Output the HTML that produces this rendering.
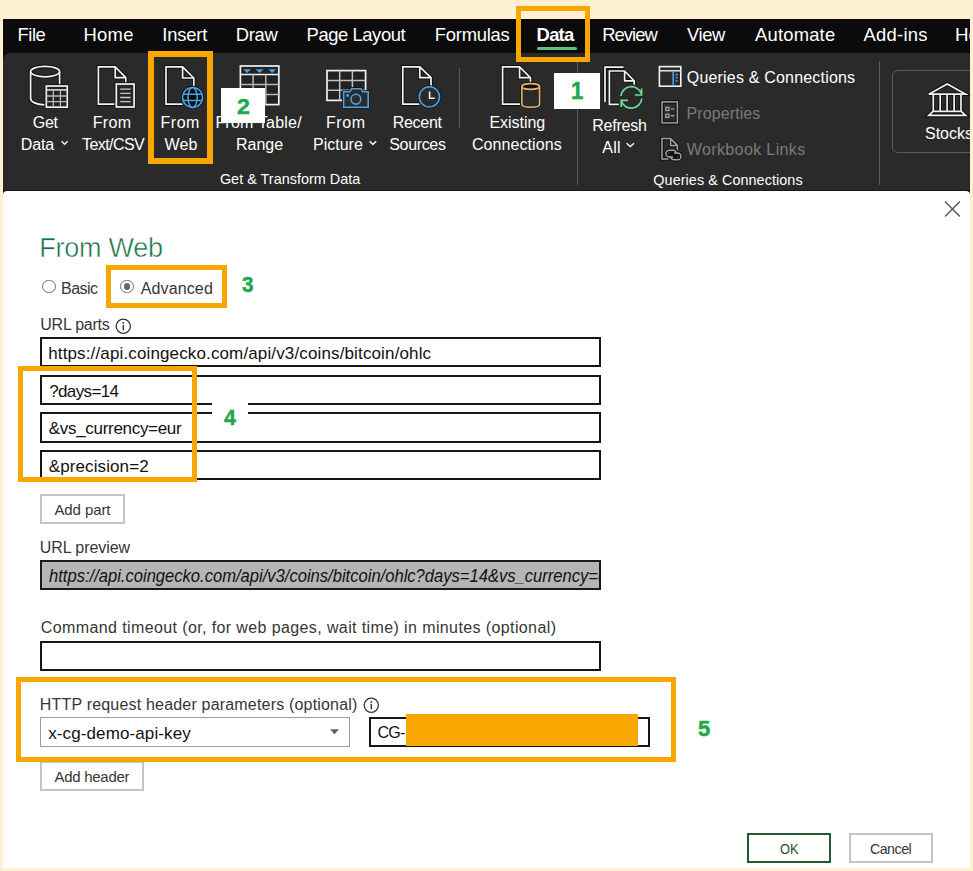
<!DOCTYPE html>
<html><head><meta charset="utf-8"><title>From Web</title>
<style>
html,body{margin:0;padding:0;width:973px;height:871px;overflow:hidden;background:#fdf1d1;font-family:"Liberation Sans",sans-serif}
.a{position:absolute;box-sizing:border-box}
.t{position:absolute;white-space:nowrap;line-height:1;transform-origin:0 0;font-family:"Liberation Sans",sans-serif}
.ov{z-index:5}
.dg{z-index:6}
</style></head><body>
<!-- menu + ribbon -->
<div class="a" style="left:3px;top:19px;width:967px;height:180px;background:#0b0b0b"></div>
<div class="a" style="left:3px;top:53px;width:967px;height:146px;background:#2a2a2a;border-top-left-radius:7px;border-top-right-radius:0"></div>
<!-- data underline -->
<div class="a" style="left:536.5px;top:46.5px;width:40.5px;height:3px;border-radius:2px;background:#63c27f"></div>
<!-- separators -->
<div class="a" style="left:459px;top:68px;width:1px;height:60px;background:#5a5a5a"></div>
<div class="a" style="left:577px;top:62px;width:1px;height:123px;background:#5a5a5a"></div>
<div class="a" style="left:879px;top:61px;width:1px;height:124px;background:#5a5a5a"></div>
<!-- stocks box -->
<div class="a" style="left:892px;top:70px;width:100px;height:83px;border:1px solid #5c5c5c;border-radius:6px"></div>
<!-- dialog -->
<div class="a" style="left:3px;top:189.5px;width:967px;height:2px;background:#161616"></div>
<div class="a" style="left:3px;top:191px;width:967px;height:677px;background:#fff;border-radius:4px 4px 0 0"></div>
<!-- radios -->
<div class="a" style="left:42.3px;top:280px;width:13.4px;height:13.4px;border:1.3px solid #6e6e6e;border-radius:50%"></div>
<div class="a" style="left:120.3px;top:279.8px;width:13.6px;height:13.6px;border:1.3px solid #6e6e6e;border-radius:50%"></div>
<div class="a" style="left:123.9px;top:283.4px;width:6.4px;height:6.4px;background:#666;border-radius:50%"></div>
<!-- info icons -->
<svg class="a" style="left:114px;top:316.5px" width="19" height="19"><circle cx="9.3" cy="9.2" r="7.1" fill="none" stroke="#333" stroke-width="1.3"/><circle cx="9.3" cy="5.9" r="0.95" fill="#333"/><path d="M9.3 8 V13.2" stroke="#333" stroke-width="1.4"/></svg>
<svg class="a" style="left:361.5px;top:695.8px" width="19" height="19"><circle cx="9.3" cy="9.2" r="7.1" fill="none" stroke="#333" stroke-width="1.3"/><circle cx="9.3" cy="5.9" r="0.95" fill="#333"/><path d="M9.3 8 V13.2" stroke="#333" stroke-width="1.4"/></svg>
<!-- url inputs -->
<div class="a" style="left:40px;top:337.3px;width:561px;height:30px;border:2px solid #161616"></div>
<div class="a" style="left:40px;top:375px;width:561px;height:30px;border:2px solid #161616"></div>
<div class="a" style="left:40px;top:412.3px;width:561px;height:30.6px;border:2px solid #161616"></div>
<div class="a" style="left:40px;top:450px;width:561px;height:30px;border:2px solid #161616"></div>
<!-- add part -->
<div class="a" style="left:40px;top:494.3px;width:85px;height:30px;border:2px solid #c4c4c4;background:#fff"></div>
<!-- preview -->
<div class="a" style="left:40px;top:560.3px;width:561px;height:29.6px;border:2px solid #1a1a1a;background:#b5b5b5"></div>
<!-- command timeout -->
<div class="a" style="left:40px;top:641px;width:561px;height:30px;border:2px solid #161616"></div>
<!-- header dropdown -->
<div class="a" style="left:40px;top:717.3px;width:310px;height:30px;border:1.5px solid #9c9c9c"></div>
<svg class="a" style="left:329px;top:728px" width="11" height="7"><path d="M1 1.3 L10 1.3 L5.5 6.2 Z" fill="#5e5e5e"/></svg>
<!-- CG input -->
<div class="a" style="left:368.8px;top:717.3px;width:281.5px;height:29.5px;border:2px solid #161616"></div>
<!-- add header -->
<div class="a" style="left:40px;top:761px;width:103.5px;height:30px;border:2px solid #c4c4c4;background:#fff"></div>
<!-- ok/cancel -->
<div class="a" style="left:747px;top:833px;width:83.5px;height:30px;border:2px solid #1f5a33"></div>
<div class="a" style="left:849.4px;top:833px;width:83.5px;height:30px;border:2px solid #c4c4c4"></div>
<!-- close X -->
<svg class="a" style="left:940px;top:196px" width="25" height="25"><path d="M5 5.4 L19.9 20.6 M19.9 5.4 L5 20.6" stroke="#555" stroke-width="1.4"/></svg>

<!-- overlays: orange boxes and labels -->
<div class="a" style="left:970px;top:0;width:3px;height:871px;background:#fdf1d1;z-index:4"></div>
<div class="a ov" style="left:516px;top:5.5px;width:74px;height:56.5px;border:5.6px solid #f7a602"></div>
<div class="a ov" style="left:148.2px;top:51px;width:65px;height:113.4px;border:6px solid #f7a602"></div>
<div class="a ov" style="left:220.6px;top:88.2px;width:44.5px;height:35.2px;background:#fff"></div>
<div class="a ov" style="left:553.9px;top:72.9px;width:46.3px;height:36px;background:#fff"></div>
<div class="a ov" style="left:105.9px;top:265.1px;width:120.8px;height:42.6px;border:5.6px solid #f7a602"></div>
<div class="a ov" style="left:17.5px;top:366.3px;width:179.8px;height:115.6px;border:5.7px solid #f7a602"></div>
<div class="a ov" style="left:211.9px;top:396px;width:36.1px;height:38px;background:#fff"></div>
<div class="a ov" style="left:16.2px;top:676.5px;width:659.5px;height:85px;border:5.8px solid #f7a602"></div>
<div class="a ov" style="left:406.3px;top:713.6px;width:232.1px;height:32.8px;background:#f7a602"></div>

<svg class="a" style="left:0;top:0" width="973" height="200" viewBox="0 0 973 200">
<defs>
 <g id="ic" fill="none" stroke-linejoin="miter" stroke-linecap="butt">
  <!-- get data cylinder -->
  <path d="M30.6 71.6 V98.5 C30.6 102 36.5 104.6 44.6 104.8"/>
  <path d="M59.6 71.6 V84.6"/>
  <ellipse cx="45.1" cy="71.6" rx="14.5" ry="5.2"/>
  <!-- text/csv doc -->
  <path d="M114.6 104.2 H98.4 V66.8 H115.2 L125.8 77.6 V82.6 M115.2 66.8 V77.6 H125.8"/>
  <!-- web doc -->
  <path d="M182.6 104.2 H166 V66.8 H182.6 L193.8 78 V86 M182.6 66.8 V78 H193.8"/>
  <!-- recent doc -->
  <path d="M419.4 104.2 H402.8 V66.8 H419.8 L431 77.6 V86.2 M419.8 66.8 V77.6 H431"/>
  <!-- existing doc -->
  <path d="M520.2 104.2 H502.6 V66.8 H519.6 L530.4 77.6 V82.6 M519.6 66.8 V77.6 H530.4"/>
  <!-- refresh docs -->
  <path d="M605 102 V67.2 H623.5"/>
  <path d="M618.8 104.4 H609.4 V71 H624.6 L634.2 80.8 V84.8 M624.6 71 V80.8 H634.2"/>
  <!-- stocks -->
  <path d="M928.8 94.2 L947.3 84 L965.6 94.2 Z"/>
  <path d="M933.3 95 V111 M940.2 95 V111 M947.1 95 V111 M954.1 95 V111 M961 95 V111"/>
  <path d="M933 111.4 H961.2 L965.6 115.4 H928.8 Z"/>
 </g>
</defs>
<use href="#ic" stroke="#0e0e0e" stroke-width="3.6"/>
<use href="#ic" stroke="#f2f2f2" stroke-width="1.7"/>

<!-- get data table -->
<rect x="44.6" y="84.3" width="24.4" height="24.6" fill="#0e0e0e"/>
<rect x="46.3" y="86" width="21" height="21.2" fill="#242424" stroke="#f2f2f2" stroke-width="1.7"/>
<path d="M46.3 89.9 H67.3" stroke="#f2f2f2" stroke-width="1.4"/>
<path d="M46.3 96 H67.3 M46.3 101.6 H67.3 M53.3 89.9 V107 M60.4 89.9 V107" stroke="#b8b8b8" stroke-width="1.3"/>
<!-- text/csv small doc -->
<rect x="114.6" y="82.4" width="21" height="26" fill="#0e0e0e"/>
<rect x="116.3" y="84" width="17.8" height="23" fill="#262626" stroke="#f2f2f2" stroke-width="1.7"/>
<path d="M120.2 89.2 H130.6 M120.2 93.3 H130.6 M120.2 97.5 H130.6 M120.2 101.6 H130.6" stroke="#c8c8c8" stroke-width="1.3"/>
<!-- globe -->
<circle cx="192.6" cy="97.4" r="11.6" fill="#0e0e0e"/>
<g fill="none" stroke="#4aa3e6" stroke-width="1.5">
 <circle cx="192.6" cy="97.4" r="10"/>
 <ellipse cx="192.6" cy="97.4" rx="4.6" ry="10"/>
 <path d="M183.2 94.2 H202 M183.2 100.4 H202"/>
</g>
<!-- from table/range -->
<rect x="240.4" y="66" width="38.4" height="38.6" fill="#222" stroke="#f2f2f2" stroke-width="1.7"/>
<path d="M240.4 74.5 H278.8" stroke="#f2f2f2" stroke-width="1.6"/>
<path d="M240.4 84.5 H278.8 M240.4 94.5 H278.8 M253.1 74.5 V104.6 M265.8 74.5 V104.6" stroke="#b5b5b5" stroke-width="1.5"/>
<path d="M243.2 69.2 H251 L247.1 73 Z M255.6 69.2 H263.6 L259.6 73 Z M268.2 69.2 H276.1 L272.1 73 Z" fill="#4aa3e6"/>
<!-- from picture -->
<rect x="327" y="70.6" width="38.6" height="29.8" fill="#222" stroke="#f2f2f2" stroke-width="1.7"/>
<path d="M327 80.4 H365.6 M327 90.2 H365.6 M339.7 70.6 V100.4 M352.4 70.6 V100.4" stroke="#c0c0c0" stroke-width="1.5"/>
<path d="M342 90.2 H349 L351 87.2 H361.6 L363.6 90.2 H369.6 V108.6 H342 Z" fill="#0e0e0e"/>
<path d="M343.6 91.8 H349.8 L351.6 88.8 H361 L362.8 91.8 H368.2 V107.2 H343.6 Z" fill="#2b2b2b" stroke="#4aa3e6" stroke-width="1.6"/>
<circle cx="355.9" cy="99.2" r="4.9" fill="none" stroke="#4aa3e6" stroke-width="1.6"/>
<rect x="346.2" y="94.1" width="2.6" height="2.6" fill="#4aa3e6"/>
<!-- recent clock -->
<circle cx="429.4" cy="96.9" r="11.6" fill="#0e0e0e"/>
<circle cx="429.4" cy="96.9" r="10.1" fill="#2a2a2a" stroke="#4aa3e6" stroke-width="1.6"/>
<path d="M429.6 91.4 V98.3 H434.8" fill="none" stroke="#f2f2f2" stroke-width="1.6"/>
<!-- existing cylinder -->
<path d="M520.2 86.4 V104.4 C520.2 109.5 541.2 109.5 541.2 104.4 V86.4 Z" fill="#0e0e0e"/>
<ellipse cx="530.7" cy="86.4" rx="10.6" ry="4.6" fill="#0e0e0e"/>
<path d="M522.6 88 V104.2 C522.6 107.3 538.8 107.3 538.8 104.2 V88 Z" fill="#2a2a2a"/>
<g fill="none" stroke="#e6b36c" stroke-width="1.6">
 <path d="M521.8 86.5 V104.3 C521.8 108.3 539.6 108.3 539.6 104.3 V86.5"/>
 <ellipse cx="530.7" cy="86.5" rx="8.9" ry="2.9"/>
</g>
<!-- refresh arrows -->
<g fill="none" stroke="#6fdc8f" stroke-width="1.7">
 <path d="M620.8 96 A10.6 10.6 0 0 1 641.2 93.4"/>
 <path d="M641.6 88.4 V95 H634.8"/>
 <path d="M641.8 98.6 A10.6 10.6 0 0 1 621.4 101.4"/>
 <path d="M621.2 107 V100.4 H628"/>
</g>
<!-- queries icon -->
<rect x="659.4" y="66.6" width="21.4" height="19.6" fill="none" stroke="#f2f2f2" stroke-width="1.6"/>
<path d="M659.4 70.8 H680.8" stroke="#f2f2f2" stroke-width="1.4"/>
<path d="M673.2 71 V86" stroke="#4aa3e6" stroke-width="1.6"/>
<path d="M675.6 74.6 H677.6 M675.6 77.8 H677.6 M675.6 81 H677.6" stroke="#4aa3e6" stroke-width="1.6"/>
<!-- properties icon -->
<rect x="662" y="101.9" width="15.4" height="21" fill="none" stroke="#0e0e0e" stroke-width="3.4"/>
<rect x="662" y="101.9" width="15.4" height="21" fill="none" stroke="#a0a0a0" stroke-width="1.5"/>
<rect x="665.8" y="107.3" width="3.2" height="3.2" fill="none" stroke="#a0a0a0" stroke-width="1.3"/>
<rect x="665.8" y="114.2" width="3.2" height="3.2" fill="none" stroke="#a0a0a0" stroke-width="1.3"/>
<path d="M671 108.9 H674.3 M671 115.8 H674.3" stroke="#a0a0a0" stroke-width="1.4"/>
<!-- workbook links icon -->
<g fill="none" stroke="#0e0e0e" stroke-width="3.4">
 <path d="M668.4 158.9 H662 V138.6 H670.6 L677.4 145.4 V150.2 M670.6 138.6 V145.4 H677.4"/>
 <rect x="665.9" y="150.2" width="10.4" height="6.8" rx="3.4"/>
 <rect x="670.6" y="153" width="10.4" height="6.8" rx="3.4"/>
</g>
<g fill="none" stroke="#a2a2a2" stroke-width="1.5">
 <path d="M668.4 158.9 H662 V138.6 H670.6 L677.4 145.4 V150.2 M670.6 138.6 V145.4 H677.4"/>
 <path d="M673.2 157 H669.3 A3.4 3.4 0 0 1 669.3 150.2 H672.9 A3.4 3.4 0 0 1 676.3 153.6"/>
 <path d="M674 153 H677.6 A3.4 3.4 0 0 1 677.6 159.8 H674 A3.4 3.4 0 0 1 670.6 156.4"/>
</g>
<!-- chevrons -->
<g fill="none" stroke="#f2f2f2" stroke-width="1.5">
 <path d="M61.6 141.2 L64.6 144.2 L67.6 141.2"/>
 <path d="M369.6 141.2 L372.9 144.4 L376.2 141.2"/>
 <path d="M626.6 143.2 L630.3 146.6 L634 143.2"/>
</g>
</svg>

<span class="t" style="left:17.50px;top:26.00px;font-size:18.4px;color:#ffffff;letter-spacing:-0.435px;">File</span>
<span class="t" style="left:83.40px;top:26.00px;font-size:18.4px;color:#ffffff;letter-spacing:0.324px;">Home</span>
<span class="t" style="left:162.30px;top:26.00px;font-size:18.4px;color:#ffffff;letter-spacing:-0.197px;">Insert</span>
<span class="t" style="left:235.80px;top:26.00px;font-size:18.4px;color:#ffffff;letter-spacing:-0.311px;">Draw</span>
<span class="t" style="left:306.60px;top:26.00px;font-size:18.4px;color:#ffffff;letter-spacing:-0.427px;">Page Layout</span>
<span class="t" style="left:434.80px;top:26.00px;font-size:18.4px;color:#ffffff;letter-spacing:-0.250px;">Formulas</span>
<span class="t" style="left:602.20px;top:26.00px;font-size:18.4px;color:#ffffff;letter-spacing:-0.944px;">Review</span>
<span class="t" style="left:687.00px;top:26.00px;font-size:18.4px;color:#ffffff;letter-spacing:-0.416px;">View</span>
<span class="t" style="left:755.00px;top:26.00px;font-size:18.4px;color:#ffffff;letter-spacing:0.202px;">Automate</span>
<span class="t" style="left:863.60px;top:26.00px;font-size:18.4px;color:#ffffff;letter-spacing:0.257px;">Add-ins</span>
<span class="t" style="left:536.60px;top:26.00px;font-size:18.4px;color:#ffffff;font-weight:700;letter-spacing:-0.744px;">Data</span>
<span class="t" style="left:32.80px;top:115.00px;font-size:16.0px;color:#ffffff;letter-spacing:-0.322px;">Get</span>
<span class="t" style="left:20.70px;top:137.00px;font-size:16.0px;color:#ffffff;letter-spacing:-0.099px;">Data</span>
<span class="t" style="left:92.70px;top:115.00px;font-size:16.0px;color:#ffffff;letter-spacing:0.333px;">From</span>
<span class="t" style="left:82.10px;top:137.00px;font-size:16.0px;color:#ffffff;letter-spacing:-0.588px;">Text/CSV</span>
<span class="t" style="left:160.60px;top:115.00px;font-size:16.0px;color:#ffffff;letter-spacing:0.467px;">From</span>
<span class="t" style="left:164.60px;top:137.00px;font-size:16.0px;color:#ffffff;letter-spacing:0.095px;">Web</span>
<span class="t" style="left:215.40px;top:115.00px;font-size:16.0px;color:#ffffff;letter-spacing:0.208px;">From Table/</span>
<span class="t" style="left:236.00px;top:137.00px;font-size:16.0px;color:#ffffff;">Range</span>
<span class="t" style="left:325.90px;top:115.00px;font-size:16.0px;color:#ffffff;letter-spacing:0.600px;">From</span>
<span class="t" style="left:313.00px;top:137.00px;font-size:16.0px;color:#ffffff;">Picture</span>
<span class="t" style="left:392.70px;top:115.00px;font-size:16.0px;color:#ffffff;letter-spacing:-0.290px;">Recent</span>
<span class="t" style="left:389.30px;top:137.00px;font-size:16.0px;color:#ffffff;letter-spacing:-0.349px;">Sources</span>
<span class="t" style="left:489.40px;top:115.00px;font-size:16.0px;color:#ffffff;letter-spacing:-0.032px;">Existing</span>
<span class="t" style="left:471.90px;top:137.00px;font-size:16.0px;color:#ffffff;letter-spacing:0.085px;">Connections</span>
<span class="t" style="left:592.20px;top:118.00px;font-size:16.0px;color:#ffffff;letter-spacing:-0.221px;">Refresh</span>
<span class="t" style="left:602.20px;top:140.00px;font-size:16.0px;color:#ffffff;letter-spacing:0.287px;">All</span>
<span class="t" style="left:686.80px;top:70.00px;font-size:16.0px;color:#ffffff;letter-spacing:0.188px;">Queries &amp; Connections</span>
<span class="t" style="left:686.60px;top:106.00px;font-size:16.0px;color:#7a7a7a;letter-spacing:0.086px;">Properties</span>
<span class="t" style="left:686.80px;top:142.00px;font-size:16.0px;color:#7a7a7a;letter-spacing:0.375px;">Workbook Links</span>
<span class="t" style="left:219.90px;top:172.00px;font-size:14.4px;color:#ffffff;letter-spacing:0.020px;">Get &amp; Transform Data</span>
<span class="t" style="left:653.30px;top:173.00px;font-size:14.4px;color:#ffffff;letter-spacing:0.066px;">Queries &amp; Connections</span>
<span class="t" style="left:39.30px;top:235.00px;font-size:27.0px;color:#17704a;letter-spacing:-0.258px;-webkit-text-stroke:0.5px #fff;">From Web</span>
<span class="t" style="left:61.00px;top:281.00px;font-size:16.0px;color:#363636;letter-spacing:-0.531px;">Basic</span>
<span class="t" style="left:140.70px;top:281.00px;font-size:16.0px;color:#363636;letter-spacing:0.133px;">Advanced</span>
<span class="t" style="left:40.30px;top:317.00px;font-size:16.0px;color:#363636;letter-spacing:-0.253px;">URL parts</span>
<span class="t" style="left:48.20px;top:345.00px;font-size:17.0px;color:#111;letter-spacing:0.136px;">https://api.coingecko.com/api/v3/coins/bitcoin/ohlc</span>
<span class="t" style="left:49.20px;top:383.00px;font-size:17.0px;color:#111;letter-spacing:-0.621px;">?days=14</span>
<span class="t" style="left:48.80px;top:420.00px;font-size:17.0px;color:#111;letter-spacing:-0.308px;">&amp;vs_currency=eur</span>
<span class="t" style="left:48.80px;top:458.00px;font-size:17.0px;color:#111;letter-spacing:0.100px;">&amp;precision=2</span>
<span class="t" style="left:54.40px;top:502.00px;font-size:15.0px;color:#363636;letter-spacing:-0.091px;">Add part</span>
<span class="t" style="left:39.80px;top:540.00px;font-size:16.0px;color:#363636;letter-spacing:-0.073px;">URL preview</span>
<span class="t" style="left:40.80px;top:620.00px;font-size:16.0px;color:#363636;letter-spacing:0.389px;">Command timeout (or, for web pages, wait time) in minutes (optional)</span>
<span class="t" style="left:39.80px;top:697.00px;font-size:16.0px;color:#363636;letter-spacing:0.187px;">HTTP request header parameters (optional)</span>
<span class="t" style="left:48.20px;top:725.00px;font-size:17.0px;color:#111;letter-spacing:0.115px;">x-cg-demo-api-key</span>
<span class="t" style="left:377.40px;top:725.00px;font-size:16.0px;color:#111;letter-spacing:-0.700px;">CG-</span>
<span class="t" style="left:54.40px;top:769.00px;font-size:15.0px;color:#363636;letter-spacing:-0.263px;">Add header</span>
<span class="t" style="left:779.50px;top:842.00px;font-size:14.2px;color:#1d4f3a;transform:scaleX(0.9080);">OK</span>
<span class="t" style="left:869.90px;top:842.00px;font-size:14.2px;color:#363636;letter-spacing:-0.462px;">Cancel</span>
<span class="t" style="left:236.90px;top:96.00px;font-size:22.5px;color:#22a84b;font-weight:700;transform:scaleX(1.0333);z-index:6;-webkit-text-stroke:0.5px #22a84b;">2</span>
<span class="t" style="left:570.66px;top:80.00px;font-size:23.5px;color:#22a84b;font-weight:700;transform:scaleX(0.9417);z-index:6;-webkit-text-stroke:0.5px #22a84b;">1</span>
<span class="t" style="left:242.00px;top:275.00px;font-size:21.5px;color:#22a84b;font-weight:700;transform:scaleX(0.9583);z-index:6;-webkit-text-stroke:0.5px #22a84b;">3</span>
<span class="t" style="left:223.70px;top:407.00px;font-size:22.5px;color:#22a84b;font-weight:700;transform:scaleX(0.9462);z-index:6;-webkit-text-stroke:0.5px #22a84b;">4</span>
<span class="t" style="left:698.00px;top:718.00px;font-size:22.0px;color:#22a84b;font-weight:700;z-index:6;-webkit-text-stroke:0.5px #22a84b;">5</span>
<div style="position:absolute;left:0px;top:18px;width:970px;height:35px;overflow:hidden"><span class="t" style="left:954.98px;top:8.00px;font-size:18.4px;color:#ffffff;transform:scaleX(1.0203);">Help</span></div>
<div style="position:absolute;left:0px;top:53px;width:970px;height:138px;overflow:hidden"><span class="t" style="left:925.00px;top:73.00px;font-size:16.0px;color:#ffffff;">Stocks</span></div>
<div style="position:absolute;left:42px;top:562px;width:557px;height:26px;overflow:hidden"><span class="t" style="left:6.50px;top:5.00px;font-size:18.0px;color:#111;font-style:italic;transform:scaleX(0.9206);">https://api.coingecko.com/api/v3/coins/bitcoin/ohlc?days=14&amp;vs_currency=eur&amp;precision=2</span></div>
</body></html>
